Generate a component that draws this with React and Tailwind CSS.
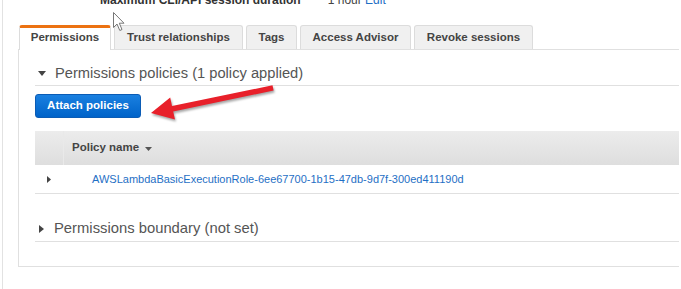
import React from "react";

function Tab({ label, width, active }) {
  if (active) {
    return (
      <div
        className={`relative z-10 flex h-[25px] items-center justify-center rounded-t-[3px] border-x border-t-[3px] border-x-[#dcdcdc] border-t-[#ec7211] bg-white text-[11.5px] font-bold text-[#444] -mb-px`}
        style={{ width }}
      >
        <span className="-mt-[2px]">{label}</span>
      </div>
    );
  }
  return (
    <div
      className="flex h-[24px] items-center justify-center rounded-t-[3px] border border-b-0 border-[#dcdcdc] bg-[#f0f0f0] text-[11.5px] font-bold text-[#444]"
      style={{ width }}
    >
      {label}
    </div>
  );
}

export default function App() {
  return (
    <div className="relative h-[289px] w-[681px] overflow-hidden bg-white font-['Liberation_Sans',Arial,sans-serif]">
      <div className="ml-[2px] h-full border-l border-[#e2e2e2] pl-[15px]">
        {/* top line (cut off) */}
        <div className="h-[25px] overflow-hidden">
          <div className="-mt-[7px] flex text-[12px] leading-[14px]">
            <span className="ml-[82px] font-bold text-[#333]">Maximum CLI/API session duration</span>
            <span className="ml-[27px] text-[#444]">
              1 hour <span className="text-[#1f6fc5]">Edit</span>
            </span>
          </div>
        </div>

        {/* tabs */}
        <div className="flex items-end gap-[3px] pl-px">
          <Tab label="Permissions" width={92} active />
          <Tab label="Trust relationships" width={129} />
          <Tab label="Tags" width={51} />
          <Tab label="Access Advisor" width={111} />
          <Tab label="Revoke sessions" width={119} />
        </div>

        {/* panel */}
        <div className="w-[661px] border-y border-l border-[#e0e0e0] pl-[16px] pb-[24px]">
          <div className="flex items-center border-b border-[#e0e0e0] pt-[14px] pb-[3px] text-[14.7px] leading-[18px] text-[#555]">
            <svg width="8" height="5" viewBox="0 0 8 5" className="ml-[3px] mr-[9px] mt-[1px]">
              <path d="M0 0 L8 0 L4 5 Z" fill="#444" />
            </svg>
            <span>Permissions policies (1 policy applied)</span>
          </div>

          <div className="mt-[8px] flex h-[24px] w-[106px] items-center justify-center rounded-[3px] border border-[#0b5cb5] bg-[linear-gradient(#1a80e0,#0063c9)] text-[11.5px] font-bold text-white">
            Attach policies
          </div>

          <div className="mt-[13px]">
            <div className="flex h-[34px] bg-[linear-gradient(#ececec,#dedede)]">
              <div className="w-[29px] border-r border-[#e9e9e9]" />
              <div className="flex items-center pl-[8px] text-[11.5px] font-bold text-[#444]">
                Policy name
                <svg width="7" height="4" viewBox="0 0 7 4" className="ml-[6px] mt-[1px]">
                  <path d="M0 0 L7 0 L3.5 4 Z" fill="#555" />
                </svg>
              </div>
            </div>
            <div className="flex h-[29px] items-center border-b border-[#e0e0e0]">
              <svg width="4" height="7" viewBox="0 0 4 7" className="ml-[12px]">
                <path d="M0 0 L4 3.5 L0 7 Z" fill="#444" />
              </svg>
              <span className="ml-[41px] text-[11px] text-[#1f6fc5]">
                AWSLambdaBasicExecutionRole-6ee67700-1b15-47db-9d7f-300ed411190d
              </span>
            </div>
          </div>

          <div className="flex items-center border-b border-[#e0e0e0] pt-[25px] pb-[4px] text-[14.8px] leading-[18px] text-[#555]">
            <svg width="5" height="8" viewBox="0 0 5 8" className="ml-[4px] mr-[10px] mt-[1px]">
              <path d="M0 0 L5 4 L0 8 Z" fill="#444" />
            </svg>
            <span>Permissions boundary (not set)</span>
          </div>
        </div>
      </div>

      {/* red arrow annotation */}
      <svg
        className="pointer-events-none absolute left-0 top-0 drop-shadow-[1px_2px_1px_rgba(0,0,0,0.35)]"
        width="681"
        height="289"
        viewBox="0 0 681 289"
      >
        <polygon
          points="151,113 170.2,97.6 172,106 272.5,85.3 273.6,90.6 173.2,111.4 175,119.6"
          fill="#e8202a"
        />
      </svg>

      {/* mouse cursor */}
      <svg
        className="pointer-events-none absolute left-[113px] top-[12px]"
        width="14"
        height="20"
        viewBox="0 0 14 20"
      >
        <path
          d="M0.5 0.5 L0.5 15.5 L4 12 L6.8 18.5 L9 17.5 L6.3 11.2 L11 11.2 Z"
          fill="#fff"
          stroke="#777"
          strokeWidth="1"
          strokeLinejoin="round"
        />
      </svg>
    </div>
  );
}
